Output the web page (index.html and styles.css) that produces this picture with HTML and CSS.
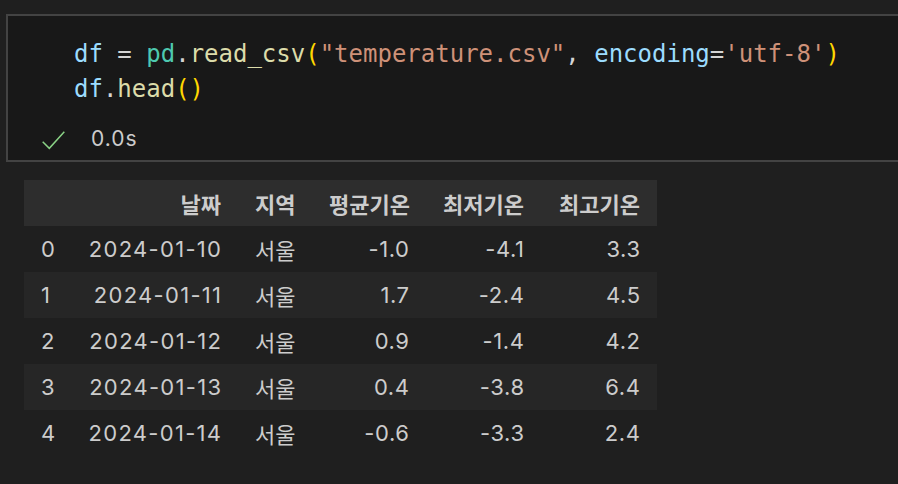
FILE: index.html
```html
<!DOCTYPE html>
<html lang="ko">
<head>
<meta charset="utf-8">
<title>Notebook cell</title>
<link rel="stylesheet" href="styles.css">
</head>
<body>
<div class="cell">
  <pre class="code"><span class="var">df</span> <span class="op">=</span> <span class="mod">pd</span><span class="op">.</span><span class="fn">read_csv</span><span class="br">(</span><span class="str">"temperature.csv"</span><span class="op">,</span> <span class="var">encoding</span><span class="op">=</span><span class="str">'utf-8'</span><span class="br">)</span>
<span class="var">df</span><span class="op">.</span><span class="fn">head</span><span class="br">()</span></pre>
  <div class="status">
    <svg class="check" width="24" height="20" viewBox="0 0 24 20"><polyline points="1.7,11.7 8.3,18.3 23.3,1.7" fill="none" stroke="#89d185" stroke-width="1.5"/></svg>
    <span class="time">0.0s</span>
  </div>
</div>
<table class="df">
  <colgroup>
    <col class="c-idx"><col class="c-date"><col class="c-reg"><col class="c-num1"><col class="c-num2"><col class="c-num3">
  </colgroup>
  <thead>
    <tr><th></th><th>날짜</th><th>지역</th><th>평균기온</th><th>최저기온</th><th>최고기온</th></tr>
  </thead>
  <tbody>
    <tr><th>0</th><td class="d">2024-01-10</td><td class="k">서울</td><td>-1.0</td><td>-4.1</td><td>3.3</td></tr>
    <tr><th>1</th><td class="d">2024-01-11</td><td class="k">서울</td><td>1.7</td><td>-2.4</td><td>4.5</td></tr>
    <tr><th>2</th><td class="d">2024-01-12</td><td class="k">서울</td><td>0.9</td><td>-1.4</td><td>4.2</td></tr>
    <tr><th>3</th><td class="d">2024-01-13</td><td class="k">서울</td><td>0.4</td><td>-3.8</td><td>6.4</td></tr>
    <tr><th>4</th><td class="d">2024-01-14</td><td class="k">서울</td><td>-0.6</td><td>-3.3</td><td>2.4</td></tr>
  </tbody>
</table>
</body>
</html>
```
FILE: styles.css
```css
html, body {
  margin: 0;
  padding: 0;
  background: #1f1f1f;
}
body {
  height: 484px;
  overflow: hidden;
}
.cell {
  margin: 14px 0 0 6px;
  border: 2px solid #434343;
  border-right: none;
  background: #181818;
  padding: 21px 0 7px 66px;
}
.code {
  margin: 0;
  font-family: "DejaVu Sans Mono", monospace;
  font-size: 24px;
  line-height: 35px;
  color: #d4d4d4;
}
.var { color: #9cdcfe; }
.op { color: #d4d4d4; }
.mod { color: #4ec9b0; }
.fn { color: #dcdcaa; }
.br { color: #ffd700; }
.str { color: #ce9178; }
.status {
  display: flex;
  align-items: center;
  margin: 18px 0 0 -33px;
  height: 28px;
}
.check {
  display: block;
  margin-top: 2px;
}
.time {
  margin-left: 26px;
  font-family: "Inter", "Noto Sans", sans-serif;
  font-size: 21px;
  line-height: 28px;
  letter-spacing: 1px;
  color: #cccccc;
}
.df {
  margin: 18px 0 0 24px;
  border-collapse: collapse;
  table-layout: fixed;
  width: 633px;
  font-family: "Inter", "Noto Sans CJK KR", sans-serif;
  font-size: 22px;
  color: #cccccc;
}
.c-idx { width: 46px; }
.c-date { width: 168px; }
.c-reg { width: 74px; }
.c-num1 { width: 114px; }
.c-num2 { width: 115px; }
.c-num3 { width: 116px; }
.df th, .df td {
  height: 46px;
  padding: 0 17px;
  text-align: right;
  white-space: nowrap;
  font-weight: normal;
}
.df td {
  letter-spacing: 0.6px;
  padding-right: 16.4px;
}
.df td.d {
  letter-spacing: 1.3px;
  padding-right: 15.7px;
}
.df td.k {
  letter-spacing: 0;
  padding-right: 17px;
}
.df thead th {
  font-weight: bold;
  background: #2d2d2d;
}
.df tbody th {
  text-align: left;
}
.df tbody tr:nth-child(even) {
  background: #262626;
}
```
